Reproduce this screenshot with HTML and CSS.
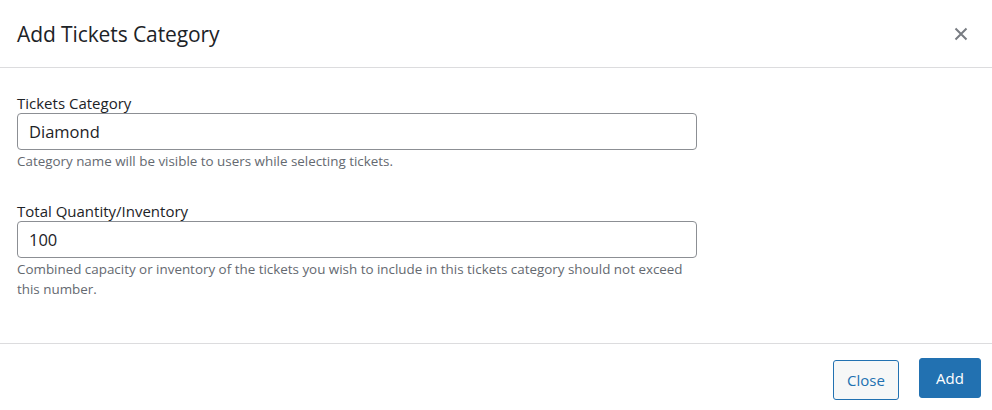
FILE: index.html
```html
<!DOCTYPE html>
<html>
<head>
<meta charset="utf-8">
<link rel="stylesheet" href="styles.css">
</head>
<body>
<div class="modal">
  <div class="modal-header">
    <h1 class="modal-title">Add Tickets Category</h1>
    <button class="close-x" aria-label="Close">
      <svg width="14" height="14" viewBox="0 0 14 14"><path d="M1.5 1.5 L12.5 12.5 M12.5 1.5 L1.5 12.5" stroke="#787c82" stroke-width="2" fill="none"/></svg>
    </button>
  </div>
  <div class="modal-body">
    <div class="field">
      <label class="label">Tickets Category</label>
      <input class="input" type="text" value="Diamond">
      <p class="help">Category name will be visible to users while selecting tickets.</p>
    </div>
    <div class="field">
      <label class="label">Total Quantity/Inventory</label>
      <input class="input" type="text" value="100">
      <p class="help">Combined capacity or inventory of the tickets you wish to include in this tickets category should not exceed this number.</p>
    </div>
  </div>
  <div class="modal-footer">
    <button class="btn btn-secondary">Close</button>
    <button class="btn btn-primary">Add</button>
  </div>
</div>
</body>
</html>
```
FILE: styles.css
```css
* { box-sizing: border-box; }
html, body { margin: 0; padding: 0; background: #fff; }
body { font-family: "Open Sans", "Noto Sans", "Liberation Sans", sans-serif; color: #1d2327; }
.modal { width: 992px; height: 410px; display: flex; flex-direction: column; }
.modal-header {
  height: 68px;
  border-bottom: 1px solid #dcdcde;
  display: flex; align-items: center; justify-content: space-between;
  padding: 0 24px 0 17px;
}
.modal-title { margin: 0; font-size: 21px; font-weight: 500; color: #1d2327; letter-spacing: -0.1px; }
.close-x { background: none; border: 0; padding: 0; width: 14px; height: 14px; display: flex; cursor: pointer; }
.modal-body { padding: 25px 17px 0 17px; height: 276px; border-bottom: 1px solid #dcdcde; }
.field { width: 680px; margin-bottom: 30px; }
.label { display: block; font-size: 15px; line-height: 20px; color: #1d2327; margin-bottom: 0; }
.input {
  display: block; width: 680px; height: 37px; margin: 0;
  border: 1px solid #8c8f94; border-radius: 4px;
  padding: 0 11px; font: inherit; font-size: 16.5px; color: #1d2327; background: #fff;
}
.help { margin: 1px 0 0 0; font-size: 13.4px; line-height: 20px; color: #646970; }
.modal-footer {
  flex: 1; display: flex; justify-content: flex-end; align-items: center;
  gap: 20px; padding: 2px 11px 0 0;
}
.btn { font: inherit; font-size: 15px; border-radius: 3px; cursor: pointer; }
.btn-secondary {
  width: 66px; height: 40px; margin-top: 4px;
  background: #f6f7f7; color: #2271b1; border: 1px solid #2271b1;
}
.btn-primary {
  width: 62px; height: 40px;
  background: #2271b1; color: #fff; border: 1px solid #2271b1;
}
```
